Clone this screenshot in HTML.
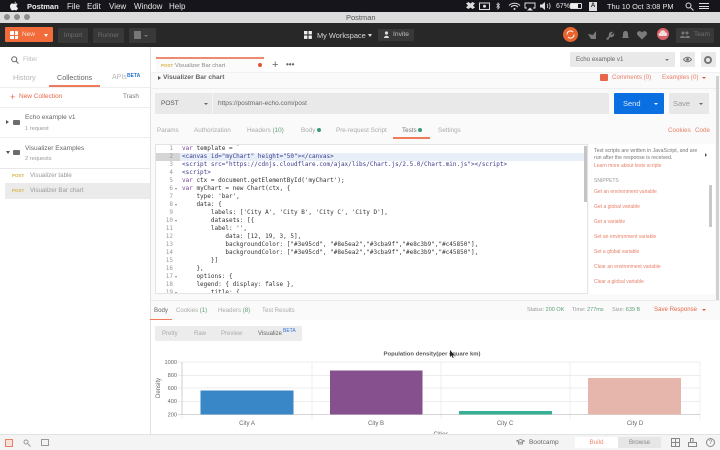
<!DOCTYPE html>
<html><head><meta charset="utf-8">
<style>
*{margin:0;padding:0;box-sizing:border-box}
html,body{width:720px;height:450px;overflow:hidden;background:#fff}
body{font-family:"Liberation Sans",sans-serif;position:relative}
#w{position:absolute;left:0;top:0;width:720px;height:450px;overflow:hidden;filter:blur(.35px)}
.a{position:absolute;white-space:nowrap}
.t{position:absolute;white-space:nowrap;line-height:10px}
.c{position:absolute;left:182px;white-space:pre;font:6px/8px "DejaVu Sans Mono","Liberation Mono",monospace;color:#333}
.n{position:absolute;left:150px;width:23px;text-align:right;font:6px/8px "DejaVu Sans Mono","Liberation Mono",monospace;color:#999}
.f{position:absolute;left:175px;border:1.500px solid transparent;border-top:2px solid #888;border-bottom:0}
.k{color:#7a3e9d}.s{color:#3a3a8c}.g{color:#2e8b6a}
.l{position:absolute;left:594px;font-size:5px;line-height:8px;color:#e8806a;white-space:nowrap}
.m{color:#e6e6e6;font-size:8px;line-height:9px;top:2px}
</style></head><body><div id="w">

<!-- mac menu -->
<div class="a" style="left:0;top:0;width:720px;height:12px;background:#15151b"></div>
<svg class="a" style="left:10px;top:1px" width="8" height="10" viewBox="0 0 8 10"><path d="M5.500 0.500C5 1 4.500 1.600 4.600 2.400 5.400 2.400 6 1.600 5.500.5zM4.200 2.800C3.400 2.800 3 2.400 2.300 2.400 1 2.500 0 3.600 0 5.200 0 7 1.300 9.500 2.400 9.500 3 9.500 3.500 9 4.200 9 5 9 5.300 9.500 6 9.500 7 9.500 7.800 7.800 8 7 7 6.600 6.500 5.800 6.500 5 6.500 4.200 7 3.600 7.600 3.200 7 2.600 6.300 2.400 5.800 2.400 5.200 2.400 4.700 2.800 4.200 2.800z" fill="#eee"/></svg>
<div class="a m" style="left:27px;font-weight:bold;color:#eee;font-size:7.500px">Postman</div>
<div class="a m" style="left:67px">File</div>
<div class="a m" style="left:87px">Edit</div>
<div class="a m" style="left:109px">View</div>
<div class="a m" style="left:134px">Window</div>
<div class="a m" style="left:169px">Help</div>
<svg class="a" style="left:465px;top:1px" width="72" height="10" viewBox="0 0 72 10" fill="none" stroke="#ddd" stroke-width="1">
<path d="M1 2.500L3.500 1 5.500 2.500 7.500 1 10 2.500 8 4.500 10 6.500 7.500 8 5.500 6.500 3.500 8 1 6.500 3 4.500z" fill="#ddd" stroke="none"/>
<rect x="14.500" y="2" width="10" height="6.500"/><circle cx="19.500" cy="5.200" r="1.500" fill="#ddd" stroke="none"/>
<path d="M31.500 3l3 3-1.500 2V2l1.500 1.500-3 3" stroke-width=".7"/>
<path d="M44 4.500c3-3 8-3 11 0M46 6c2-2 5-2 7 0"/><circle cx="49.500" cy="8" r="1" fill="#ddd" stroke="none"/>
<path d="M62 7h-2V2h10v5h-2"/><path d="M62 9.500h6l-3-3z" fill="#ddd" stroke="none"/>
</svg>
<svg class="a" style="left:540px;top:2px" width="12" height="8" viewBox="0 0 12 8"><path d="M0 2.500h2l3-2.500v8l-3-2.500H0z" fill="#ddd"/><path d="M7 2c1 1 1 3 0 4M9 1c1.500 1.500 1.500 4.500 0 6" stroke="#ddd" fill="none" stroke-width=".8"/></svg>
<div class="a m" style="left:556px;font-size:7px">67%</div>
<div class="a" style="left:570px;top:3px;width:12px;height:6px;border:1px solid #ddd;border-radius:1px"><div style="width:7px;height:4px;background:#eee"></div></div>
<div class="a" style="left:589px;top:2px;width:8px;height:9px;background:#ddd;color:#222;font-size:6px;line-height:9px;text-align:center;font-weight:bold">A</div>
<div class="a m" style="left:607px;font-size:7.400px">Thu 10 Oct</div>
<div class="a m" style="left:646px;font-size:7.400px">3:08 PM</div>
<svg class="a" style="left:685px;top:2px" width="9" height="9" viewBox="0 0 9 9" fill="none" stroke="#ddd"><circle cx="3.500" cy="3.500" r="2.500"/><path d="M5.500 5.500l3 3"/></svg>
<div class="a" style="left:699px;top:3px;width:10px;height:6px;border-top:1px solid #ddd;border-bottom:1px solid #ddd"><div style="height:1px;background:#ddd;margin-top:1.500px"></div></div>

<!-- title bar -->
<div class="a" style="left:0;top:12px;width:720px;height:11px;background:#dcdcdc"></div>
<div class="a" style="left:4px;top:14px;width:6px;height:6px;border-radius:50%;background:#8e8e8e"></div>
<div class="a" style="left:14px;top:14px;width:6px;height:6px;border-radius:50%;background:#8e8e8e"></div>
<div class="a" style="left:24px;top:14px;width:6px;height:6px;border-radius:50%;background:#8e8e8e"></div>
<div class="a" style="left:346px;top:13px;font-size:7.500px;line-height:9px;color:#555">Postman</div>

<!-- toolbar -->
<div class="a" style="left:0;top:23px;width:720px;height:24px;background:#282828"></div>
<div class="a" style="left:5px;top:27px;width:48px;height:15px;background:#f26b3a;border-radius:1px"></div>
<div class="a" style="left:10px;top:31px;width:8px;height:8px;background:#fff;border-radius:1px"></div>
<div class="a" style="left:13.500px;top:31px;width:1px;height:8px;background:#f26b3a"></div>
<div class="a" style="left:10px;top:34.500px;width:8px;height:1px;background:#f26b3a"></div>
<div class="a" style="left:22px;top:30px;font-size:6.500px;line-height:10px;color:#ffe2d6">New</div>
<div class="a" style="left:44px;top:34px;border:2.500px solid transparent;border-top:3px solid #fff;border-bottom:0"></div>
<div class="a" style="left:58px;top:28px;width:30px;height:15px;background:#383838;border-radius:1px;font-size:6.500px;line-height:15px;text-align:center;color:#6f6f6f">Import</div>
<div class="a" style="left:93px;top:28px;width:31px;height:15px;background:#383838;border-radius:1px;font-size:6.500px;line-height:15px;text-align:center;color:#6f6f6f">Runner</div>
<div class="a" style="left:129px;top:28px;width:27px;height:15px;background:#383838;border-radius:1px"></div>
<div class="a" style="left:134px;top:31px;width:7px;height:8px;background:#777"></div>
<div class="a" style="left:144px;top:35px;border:2px solid transparent;border-top:2px solid #777;border-bottom:0"></div>
<svg class="a" style="left:304px;top:31px" width="8" height="8" viewBox="0 0 8 8" fill="#eee"><rect width="3.400" height="3.400"/><rect x="4.500" width="3.400" height="3.400"/><rect y="4.500" width="3.400" height="3.400"/><rect x="4.500" y="4.500" width="3.400" height="3.400"/></svg>
<div class="a" style="left:317px;top:30px;font-size:7.400px;line-height:11px;color:#d8d8d8">My Workspace</div>
<div class="a" style="left:368px;top:34px;border:2.500px solid transparent;border-top:3px solid #ddd;border-bottom:0"></div>
<div class="a" style="left:378px;top:29px;width:36px;height:12px;background:#383838;border-radius:1px"></div>
<svg class="a" style="left:383px;top:31px" width="8" height="8" viewBox="0 0 8 8" fill="#ddd"><circle cx="3.500" cy="2" r="1.600"/><path d="M1 7c0-3 5-3 5 0z"/></svg>
<div class="a" style="left:393px;top:30px;font-size:6.700px;line-height:10px;color:#bdbdbd">Invite</div>
<div class="a" style="left:563px;top:27px;width:15px;height:15px;border-radius:50%;background:#e8642c"></div>
<svg class="a" style="left:566px;top:30px" width="9" height="9" viewBox="0 0 9 9" fill="none" stroke="#fff" stroke-width="1"><path d="M1 4.500a3.500 3.500 0 0 1 6-2.500M8 4.500a3.500 3.500 0 0 1-6 2.500"/></svg>
<svg class="a" style="left:587px;top:30px" width="65" height="10" viewBox="0 0 65 10" fill="#7b7b7b">
<path d="M1 4l5 1 3-4 0 8-5 0z"/>
<path d="M19 9l3-3c-1-3 2-5 4-4l-2 2 1 1 2-2c1 2-1 5-4 4l-2 3z"/>
<path d="M35 8c1-1 1-2 1-4 0-2 1-3 2.500-3s2.500 1 2.500 3c0 2 0 3 1 4z"/>
<path d="M55 9.500l-4.500-4.500c-2-3 2.500-5.500 4.500-2.500 2-3 6.500-.5 4.500 2.500z"/></svg>
<div class="a" style="left:657px;top:28px;width:12px;height:12px;border-radius:50%;background:#d9626a"></div>
<svg class="a" style="left:657px;top:28px" width="12" height="12" viewBox="0 0 12 12"><path d="M3 8a1.500 1.500 0 0 1 0-3 2.800 2.800 0 0 1 5.500-.5 1.800 1.800 0 0 1 .5 3.500z" fill="#f5dcdc"/></svg>
<div class="a" style="left:676px;top:28px;width:38px;height:15px;background:#383838;border-radius:1px"></div>
<svg class="a" style="left:680px;top:31px" width="10" height="8" viewBox="0 0 10 8" fill="#777"><circle cx="3" cy="2" r="1.500"/><circle cx="7" cy="2" r="1.500"/><path d="M0 7c0-3 5-3 5 0zM5 7c0-3 5-3 5 0z"/></svg>
<div class="a" style="left:694px;top:30px;font-size:6.500px;line-height:10px;color:#6f6f6f">Team</div>

<!-- sidebar -->
<div class="a" style="left:150px;top:47px;width:1px;height:388px;background:#e2e2e2"></div>
<svg class="a" style="left:11px;top:56px" width="8" height="8" viewBox="0 0 8 8" fill="none" stroke="#666" stroke-width="1"><circle cx="3.200" cy="3.200" r="2.500"/><path d="M5 5l2.500 2.500"/></svg>
<div class="a" style="left:23px;top:55px;font-size:6.500px;line-height:10px;color:#bbb">Filter</div>
<div class="t" style="left:13px;top:73px;font-size:7.300px;color:#b5b5b5">History</div>
<div class="t" style="left:57px;top:73px;font-size:7.200px;color:#666">Collections</div>
<div class="a" style="left:49px;top:85px;width:51px;height:1.500px;background:#ef7a5c"></div>
<div class="t" style="left:112px;top:73px;font-size:7px;color:#b5b5b5">APIs</div>
<div class="t" style="left:127px;top:71px;font-size:5px;color:#2b72d8;font-weight:bold">BETA</div>
<div class="a" style="left:0;top:87px;width:150px;height:1px;background:#eee"></div>
<div class="t" style="left:10px;top:92px;font-size:9px;color:#e8674a">+</div>
<div class="t" style="left:19px;top:92px;font-size:6.500px;color:#e8674a">New Collection</div>
<div class="t" style="left:123px;top:92px;font-size:6.300px;color:#777">Trash</div>
<div class="a" style="left:0;top:107px;width:150px;height:1px;background:#eee"></div>
<div class="a" style="left:6px;top:120px;border:2px solid transparent;border-left:3px solid #555;border-right:0"></div>
<div class="a" style="left:13px;top:120px;width:7px;height:5px;background:#6c6c6c;border-radius:1px"></div>
<div class="t" style="left:25px;top:113px;font-size:6.600px;color:#666">Echo example v1</div>
<div class="t" style="left:25px;top:124px;font-size:5.700px;color:#999">1 request</div>
<div class="a" style="left:0;top:137px;width:150px;height:1px;background:#eee"></div>
<div class="a" style="left:5.500px;top:151px;border:2px solid transparent;border-top:3px solid #555;border-bottom:0"></div>
<div class="a" style="left:13px;top:150px;width:7px;height:5px;background:#6c6c6c;border-radius:1px"></div>
<div class="t" style="left:25px;top:144px;font-size:6.600px;color:#666">Visualizer Examples</div>
<div class="t" style="left:25px;top:154px;font-size:5.700px;color:#999">2 requests</div>
<div class="a" style="left:0;top:168px;width:150px;height:1px;background:#e8e8e8"></div>
<div class="t" style="left:12px;top:171px;font-size:4.500px;font-weight:bold;color:#d8b24a">POST</div>
<div class="t" style="left:30px;top:171px;font-size:6.200px;color:#999">Visualizer table</div>
<div class="a" style="left:5px;top:183px;width:145px;height:16px;background:#ebebeb"></div>
<div class="t" style="left:12px;top:186px;font-size:4.500px;font-weight:bold;color:#d8b24a">POST</div>
<div class="t" style="left:30px;top:186px;font-size:6.200px;color:#999">Visualizer Bar chart</div>

<!-- main -->
<div class="a" style="left:151px;top:72px;width:569px;height:363px;background:#fafafa"></div>
<div class="a" style="left:156px;top:57px;width:108px;height:15px;background:#fbfbfb;border-top:2px solid #ef8a70"></div>
<div class="t" style="left:161px;top:61px;font-size:4.500px;font-weight:bold;color:#d8b24a">POST</div>
<div class="t" style="left:175px;top:61px;font-size:5.800px;color:#888">Visualizer Bar chart</div>
<div class="a" style="left:258px;top:63px;width:4px;height:4px;border-radius:50%;background:#e0563a"></div>
<div class="t" style="left:272px;top:60px;font-size:11px;color:#666">+</div>
<div class="t" style="left:286px;top:60px;font-size:8px;color:#666;font-weight:bold">•••</div>
<div class="a" style="left:158px;top:76px;border:2px solid transparent;border-left:3px solid #555;border-right:0"></div>
<div class="t" style="left:163px;top:73px;font-size:6.600px;font-weight:bold;color:#666">Visualizer Bar chart</div>
<div class="a" style="left:151px;top:72px;width:569px;height:0;border-top:1px solid #f1f1f1"></div>
<div class="a" style="left:151px;top:88px;width:569px;height:1px;background:#eee"></div>

<div class="a" style="left:570px;top:52px;width:105px;height:15px;background:#e9e9e9;border-radius:1px"></div>
<div class="t" style="left:576px;top:55px;font-size:6.200px;color:#666">Echo example v1</div>
<div class="a" style="left:665px;top:59px;border:2px solid transparent;border-top:2.500px solid #777;border-bottom:0"></div>
<div class="a" style="left:680px;top:52px;width:15px;height:15px;background:#e9e9e9;border-radius:1px"></div>
<svg class="a" style="left:683px;top:56px" width="9" height="7" viewBox="0 0 9 7" fill="none" stroke="#777"><path d="M.5 3.500C3 .5 6 .5 8.500 3.500 6 6.500 3 6.500.5 3.500z"/><circle cx="4.500" cy="3.500" r="1" fill="#777"/></svg>
<div class="a" style="left:701px;top:52px;width:15px;height:15px;background:#e9e9e9;border-radius:1px"></div>
<div class="a" style="left:704px;top:56px;width:8px;height:8px;border-radius:50%;border:2.500px solid #777"></div>
<div class="a" style="left:600px;top:74px;width:8px;height:7px;background:#e8674a;border-radius:1px"></div>
<div class="t" style="left:612px;top:73px;font-size:6.200px;color:#e8806a">Comments (0)</div>
<div class="t" style="left:662px;top:73px;font-size:6.200px;color:#e8806a">Examples (0)</div>
<div class="a" style="left:702px;top:77px;border:2px solid transparent;border-top:2.500px solid #e0563a;border-bottom:0"></div>

<!-- URL row -->
<div class="a" style="left:155px;top:93px;width:454px;height:21px;background:#e9e9e9;border-radius:1px"></div>
<div class="a" style="left:212px;top:93px;width:1px;height:21px;background:#f5f5f5"></div>
<div class="t" style="left:161px;top:99px;font-size:6.500px;color:#555">POST</div>
<div class="a" style="left:204px;top:103px;border:2px solid transparent;border-top:2.500px solid #666;border-bottom:0"></div>
<div class="t" style="left:218px;top:99px;font-size:6.500px;color:#666">https://postman-echo.com/post</div>
<div class="a" style="left:614px;top:93px;width:50px;height:21px;background:#0a6fe0;border-radius:1px"></div>
<div class="t" style="left:623px;top:99px;font-size:7.500px;color:#dbe9fb">Send</div>
<div class="a" style="left:654px;top:103px;border:2px solid transparent;border-top:2.500px solid #fff;border-bottom:0"></div>
<div class="a" style="left:669px;top:93px;width:40px;height:21px;background:#e8e8e8;border-radius:1px"></div>
<div class="t" style="left:673px;top:99px;font-size:7.500px;color:#9a9a9a">Save</div>
<div class="a" style="left:699px;top:103px;border:2px solid transparent;border-top:2.500px solid #666;border-bottom:0"></div>

<!-- request tabs -->
<div class="t" style="left:157px;top:126px;font-size:6.300px;color:#aaa">Params</div>
<div class="t" style="left:194px;top:126px;font-size:6.300px;color:#aaa">Authorization</div>
<div class="t" style="left:247px;top:126px;font-size:6.300px;color:#aaa">Headers <span style="color:#5e9e76">(10)</span></div>
<div class="t" style="left:301px;top:126px;font-size:6.300px;color:#aaa">Body</div>
<div class="a" style="left:317px;top:128px;width:4px;height:4px;border-radius:50%;background:#3a9a78"></div>
<div class="t" style="left:336px;top:126px;font-size:6.300px;color:#aaa">Pre-request Script</div>
<div class="t" style="left:402px;top:126px;font-size:6.300px;color:#777">Tests</div>
<div class="a" style="left:418px;top:128px;width:4px;height:4px;border-radius:50%;background:#3a9a78"></div>
<div class="a" style="left:393px;top:137px;width:37px;height:1.500px;background:#ef7a5c"></div>
<div class="t" style="left:438px;top:126px;font-size:6.300px;color:#aaa">Settings</div>
<div class="t" style="left:668px;top:126px;font-size:6.300px;color:#e8806a">Cookies</div>
<div class="t" style="left:695px;top:126px;font-size:6.300px;color:#e8806a">Code</div>

<!-- editor -->
<div class="a" style="left:155px;top:144px;width:433px;height:150px;background:#fff;border:1px solid #e4e4e4"></div>
<div class="a" style="left:156px;top:153px;width:431px;height:8px;background:#e8eff8"></div>
<div class="a" style="left:156px;top:153px;width:24px;height:8px;background:#d5d5d5"></div>
<div class="a" style="left:584px;top:146px;width:3px;height:56px;background:#c4c4c4"></div>
<div style="position:absolute;left:0;top:145px;width:584px;height:148px;overflow:hidden">
<div class="n" style="top:0">1</div><div class="n" style="top:8px">2</div><div class="n" style="top:16px">3</div><div class="n" style="top:24px">4</div><div class="n" style="top:32px">5</div><div class="n" style="top:40px">6</div><div class="n" style="top:48px">7</div><div class="n" style="top:56px">8</div><div class="n" style="top:64px">9</div><div class="n" style="top:72px">10</div><div class="n" style="top:80px">11</div><div class="n" style="top:88px">12</div><div class="n" style="top:96px">13</div><div class="n" style="top:104px">14</div><div class="n" style="top:112px">15</div><div class="n" style="top:120px">16</div><div class="n" style="top:128px">17</div><div class="n" style="top:136px">18</div><div class="n" style="top:144px">19</div>
<div class="f" style="top:43px"></div><div class="f" style="top:59px"></div><div class="f" style="top:75px"></div><div class="f" style="top:131px"></div><div class="f" style="top:147px"></div>
<div class="c" style="top:0"><span class="k">var</span> template = `</div>
<div class="c s" style="top:8px">&lt;canvas id="myChart" height="50"&gt;&lt;/canvas&gt;</div>
<div class="c s" style="top:16px">&lt;script src="https://cdnjs.cloudflare.com/ajax/libs/Chart.js/2.5.0/Chart.min.js"&gt;&lt;/script&gt;</div>
<div class="c s" style="top:24px">&lt;script&gt;</div>
<div class="c" style="top:32px"><span class="k">var</span> ctx = document.getElementById('myChart');</div>
<div class="c" style="top:40px"><span class="k">var</span> myChart = new Chart(ctx, {</div>
<div class="c" style="top:48px">    type: 'bar',</div>
<div class="c" style="top:56px">    data: {</div>
<div class="c" style="top:64px">        labels: ['City A', 'City B', 'City C', 'City D'],</div>
<div class="c" style="top:72px">        datasets: [{</div>
<div class="c" style="top:80px">        label: '',</div>
<div class="c" style="top:88px">            data: [12, 19, 3, 5],</div>
<div class="c" style="top:96px">            backgroundColor: ["#3e95cd", "#8e5ea2","#3cba9f","#e8c3b9","#c45850"],</div>
<div class="c" style="top:104px">            backgroundColor: ["#3e95cd", "#8e5ea2","#3cba9f","#e8c3b9","#c45850"],</div>
<div class="c" style="top:112px">        }]</div>
<div class="c" style="top:120px">    },</div>
<div class="c" style="top:128px">    options: {</div>
<div class="c" style="top:136px">    legend: { display: false },</div>
<div class="c" style="top:144px">        title: {</div>
</div>

<!-- snippets -->
<div class="a" style="left:589px;top:144px;width:126px;height:150px;background:#fff"></div>
<div class="l" style="top:147px;color:#777;font-size:5.200px">Test scripts are written in JavaScript, and are</div>
<div class="l" style="top:154px;color:#777;font-size:5.200px">run after the response is received.</div>
<div class="l" style="top:162px">Learn more about tests scripts</div>
<div class="a" style="left:705px;top:153px;border:2px solid transparent;border-left:2.500px solid #555;border-right:0"></div>
<div class="l" style="top:177px;color:#999">SNIPPETS</div>
<div class="l" style="top:188px">Get an environment variable</div>
<div class="l" style="top:203px">Get a global variable</div>
<div class="l" style="top:218px">Get a variable</div>
<div class="l" style="top:233px">Set an environment variable</div>
<div class="l" style="top:248px">Set a global variable</div>
<div class="l" style="top:263px">Clear an environment variable</div>
<div class="l" style="top:278px">Clear a global variable</div>
<div class="a" style="left:709px;top:185px;width:3px;height:42px;background:#c8c8c8"></div>
<div class="a" style="left:716px;top:76px;width:3px;height:224px;background:#d0d0d0"></div>

<!-- response -->
<div class="a" style="left:151px;top:300px;width:569px;height:1px;background:#ececec"></div>
<div class="a" style="left:151px;top:320px;width:569px;height:115px;background:#fff"></div>
<div class="t" style="left:154px;top:306px;font-size:6.100px;color:#666">Body</div>
<div class="a" style="left:150px;top:318.500px;width:22px;height:1.500px;background:#ef7a5c"></div>
<div class="t" style="left:176px;top:306px;font-size:6.100px;color:#aaa">Cookies <span style="color:#5e9e76">(1)</span></div>
<div class="t" style="left:218px;top:306px;font-size:6.100px;color:#aaa">Headers <span style="color:#5e9e76">(8)</span></div>
<div class="t" style="left:262px;top:306px;font-size:6px;color:#aaa">Test Results</div>
<div class="t" style="left:527px;top:305px;font-size:5.500px;color:#999">Status: <span style="color:#5e9e76">200 OK</span></div>
<div class="t" style="left:572px;top:305px;font-size:5.500px;color:#999">Time: <span style="color:#5e9e76">277ms</span></div>
<div class="t" style="left:612px;top:305px;font-size:5.500px;color:#999">Size: <span style="color:#5e9e76">639 B</span></div>
<div class="t" style="left:654px;top:305px;font-size:6.100px;color:#e8674a">Save Response</div>
<div class="a" style="left:702px;top:309px;border:2px solid transparent;border-top:2.500px solid #e0563a;border-bottom:0"></div>
<div class="a" style="left:155px;top:326px;width:147px;height:15px;background:#ececec;border-radius:1px"></div>
<div class="t" style="left:162px;top:329px;font-size:6px;color:#aaa">Pretty</div>
<div class="t" style="left:194px;top:329px;font-size:6px;color:#aaa">Raw</div>
<div class="t" style="left:221px;top:329px;font-size:6px;color:#aaa">Preview</div>
<div class="t" style="left:258px;top:329px;font-size:6px;color:#666">Visualize</div>
<div class="t" style="left:283px;top:326px;font-size:5px;color:#2b72d8">BETA</div>

<!-- chart -->
<svg class="a" style="left:150px;top:345px" width="570" height="90" viewBox="150 345 570 90">
<g stroke="#e8e8e8" stroke-width=".7" fill="none">
<path d="M178 362H700M178 375.500H700M178 388H700M178 401.500H700"/>
<path d="M182 362V419M312 362V419M441 362V419M570 362V419M700 362V419"/>
</g>
<path d="M178 414.500H700M182 362V414.500" stroke="#c8c8c8" stroke-width=".8" fill="none"/>
<rect x="200.500" y="390.500" width="93" height="24" fill="#3a87c8"/>
<rect x="330" y="370.500" width="92.500" height="44" fill="#86508f"/>
<rect x="459" y="411" width="93" height="3.500" fill="#36b195"/>
<rect x="588" y="378" width="93" height="36.500" fill="#e6b5ac"/>
<g font-family="Liberation Sans" font-size="5.600" fill="#666" text-anchor="end">
<text x="177" y="364">1000</text><text x="177" y="377">800</text><text x="177" y="390">600</text><text x="177" y="403">400</text><text x="177" y="416.500">200</text></g>
<g font-family="Liberation Sans" font-size="6" fill="#666" text-anchor="middle">
<text x="247" y="425">City A</text><text x="376" y="425">City B</text><text x="505" y="425">City C</text><text x="635" y="425">City D</text>
<text x="441" y="436">Cities</text>
<text transform="translate(160 388) rotate(-90)">Density</text></g>
<text x="432" y="355.500" font-family="Liberation Sans" font-size="5.900" font-weight="bold" fill="#555" text-anchor="middle">Population density(per square km)</text>
<path d="M450 350v7l1.500-1.500 1.200 2.500 1-.5-1.200-2.300h2z" fill="#222"/>
</svg>

<!-- footer -->
<div class="a" style="left:0;top:434px;width:720px;height:16px;background:#f4f4f4;border-top:1px solid #e2e2e2"></div>
<div class="a" style="left:5px;top:439px;width:8px;height:8px;border:1px solid #e8806a;background:#fbe0d8"></div>
<svg class="a" style="left:23px;top:439px" width="8" height="8" viewBox="0 0 8 8" fill="none" stroke="#999"><circle cx="3" cy="3" r="2"/><path d="M4.500 4.500l3 3"/></svg>
<div class="a" style="left:41px;top:439px;width:8px;height:7px;border:1px solid #999"></div>
<svg class="a" style="left:516px;top:439px" width="9" height="6" viewBox="0 0 9 6" fill="none" stroke="#777" stroke-width=".8"><path d="M.5 2L4.500.5 8.500 2 4.500 3.500zM2.500 3v2h4V3"/></svg>
<div class="t" style="left:529px;top:438px;font-size:6.600px;color:#666">Bootcamp</div>
<div class="a" style="left:575px;top:437px;width:43px;height:11px;background:#fff;font-size:6.300px;line-height:11px;text-align:center;color:#ef8a70">Build</div>
<div class="a" style="left:618px;top:437px;width:43px;height:11px;background:#e6e6e6;font-size:6.300px;line-height:11px;text-align:center;color:#888">Browse</div>
<svg class="a" style="left:671px;top:438px" width="9" height="9" viewBox="0 0 9 9" fill="none" stroke="#888"><rect x=".5" y=".5" width="8" height="8"/><path d="M.5 4.500h8M4.500.5v8"/></svg>
<svg class="a" style="left:688px;top:438px" width="9" height="9" viewBox="0 0 9 9" fill="none" stroke="#888"><rect x=".5" y="4.500" width="8" height="4"/><rect x="2.500" y=".5" width="2.500" height="4"/></svg>
<svg class="a" style="left:706px;top:438px" width="9" height="9" viewBox="0 0 9 9" fill="none" stroke="#888"><circle cx="4.500" cy="4.500" r="4"/></svg>
<div class="a" style="left:708px;top:438.500px;width:5px;text-align:center;font-size:6px;line-height:8px;color:#777">?</div>

</div></body></html>
